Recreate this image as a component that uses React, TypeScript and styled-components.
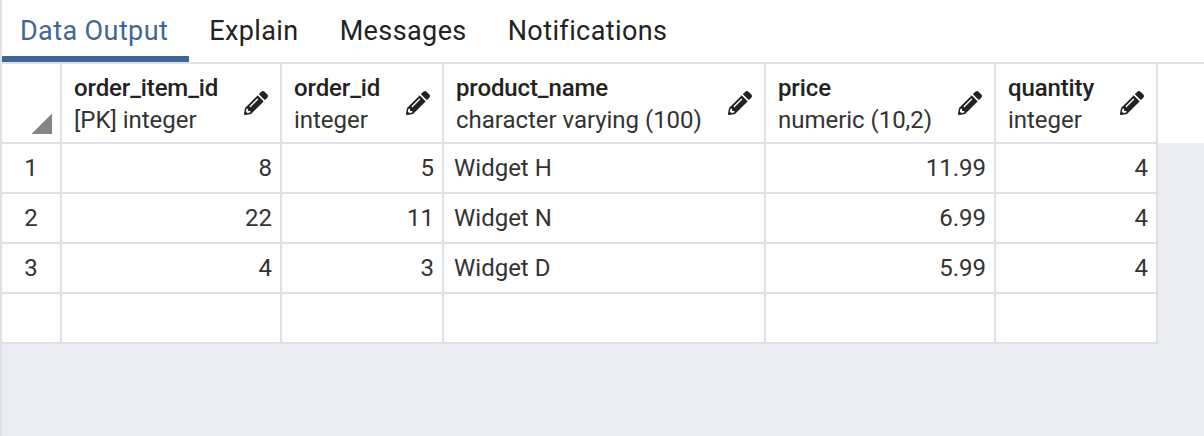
import React from 'react'
import styled, { createGlobalStyle } from 'styled-components'
import { FaPencilAlt } from 'react-icons/fa'

const columns = [
  { name: 'order_item_id', type: '[PK] integer', width: 220 },
  { name: 'order_id', type: 'integer', width: 162 },
  { name: 'product_name', type: 'character varying (100)', width: 322 },
  { name: 'price', type: 'numeric (10,2)', width: 230 },
  { name: 'quantity', type: 'integer', width: 162 },
]

const rows = [
  ['8', '5', 'Widget H', '11.99', '4'],
  ['22', '11', 'Widget N', '6.99', '4'],
  ['4', '3', 'Widget D', '5.99', '4'],
  ['', '', '', '', ''],
]

const tabs = ['Data Output', 'Explain', 'Messages', 'Notifications']

const App: React.FC = () => {
  return (
    <Page>
      <GlobalStyle />
      <TabBar>
        {tabs.map((tab, i) => (
          <Tab key={tab} active={i === 0}>
            {tab}
          </Tab>
        ))}
      </TabBar>
      <Grid>
        <HeaderRow>
          <Corner>
            <CornerMark />
          </Corner>
          {columns.map((col) => (
            <HeaderCell key={col.name} style={{ width: col.width }}>
              <HeaderText>
                <ColumnName>{col.name}</ColumnName>
                <ColumnType>{col.type}</ColumnType>
              </HeaderText>
              <EditIcon />
            </HeaderCell>
          ))}
          <HeaderFiller />
        </HeaderRow>
        {rows.map((row, r) => (
          <Row key={r}>
            <RowNumber>{row[0] ? r + 1 : ''}</RowNumber>
            {row.map((value, c) => (
              <Cell key={c} text={c === 2} style={{ width: columns[c].width }}>
                {value}
              </Cell>
            ))}
          </Row>
        ))}
      </Grid>
    </Page>
  )
}

const GlobalStyle = createGlobalStyle`
  body {
    margin: 0;
    background: #ecedf2;
    font-family: Roboto, sans-serif;
  }
`

const Page = styled.div`
  height: 436px;
  box-sizing: border-box;
  border-left: 2px solid #dee0e7;
  overflow: hidden;
`

const TabBar = styled.div`
  display: flex;
  height: 62px;
  background: #fff;
  border-bottom: 2px solid #dee0e7;
`

const Tab = styled.div<{ active?: boolean }>`
  box-sizing: border-box;
  height: 62px;
  padding: 15px 21px 0 20px;
  font-size: 27px;
  line-height: 32px;
  letter-spacing: 0.4px;
  color: ${(props) => (props.active ? '#3f6796' : '#222')};
  border-bottom: 6px solid ${(props) => (props.active ? '#3f6796' : 'transparent')};

  &:first-child {
    padding: 15px 21px 0 18px;
  }
`

const Grid = styled.div`
  display: flex;
  flex-direction: column;
`

const HeaderRow = styled.div`
  display: flex;
  height: 80px;
`

const HeaderFiller = styled.div`
  flex: 1;
  height: 79px;
  background: #fff;
`

const Row = styled.div`
  display: flex;
  height: 50px;
`

const Corner = styled.div`
  position: relative;
  box-sizing: border-box;
  width: 60px;
  background: #fff;
  border-bottom: 2px solid #dee0e7;
  border-right: 2px solid #dee0e7;
`

const CornerMark = styled.div`
  position: absolute;
  right: 8px;
  bottom: 8px;
  width: 20px;
  height: 20px;
  background: linear-gradient(135deg, transparent 50%, #858585 50%);
`

const HeaderCell = styled.div`
  display: flex;
  align-items: center;
  justify-content: space-between;
  box-sizing: border-box;
  padding: 2px 12px 0 12px;
  background: #fff;
  border-bottom: 2px solid #dee0e7;
  border-right: 2px solid #dee0e7;
`

const HeaderText = styled.div`
  display: flex;
  flex-direction: column;
`

const ColumnName = styled.div`
  font-size: 24px;
  line-height: 32px;
  font-weight: 500;
  letter-spacing: -0.12px;
  color: #222;
  white-space: nowrap;
`

const ColumnType = styled.div`
  font-size: 24px;
  line-height: 32px;
  letter-spacing: -0.03px;
  color: #333;
  white-space: nowrap;
`

const EditIcon = styled(FaPencilAlt)`
  width: 24px;
  height: 24px;
  margin-top: -2px;
  color: #222;
`

const RowNumber = styled.div`
  box-sizing: border-box;
  width: 60px;
  text-align: center;
  font-size: 24px;
  line-height: 48px;
  color: #333;
  background: #fff;
  border-bottom: 2px solid #dee0e7;
  border-right: 2px solid #dee0e7;
`

const Cell = styled.div<{ text?: boolean }>`
  box-sizing: border-box;
  padding: 0 8px 0 10px;
  font-size: 24px;
  line-height: 48px;
  color: #333;
  text-align: ${(props) => (props.text ? 'left' : 'right')};
  background: #fff;
  border-bottom: 2px solid #dee0e7;
  border-right: 2px solid #dee0e7;
`

export default App
